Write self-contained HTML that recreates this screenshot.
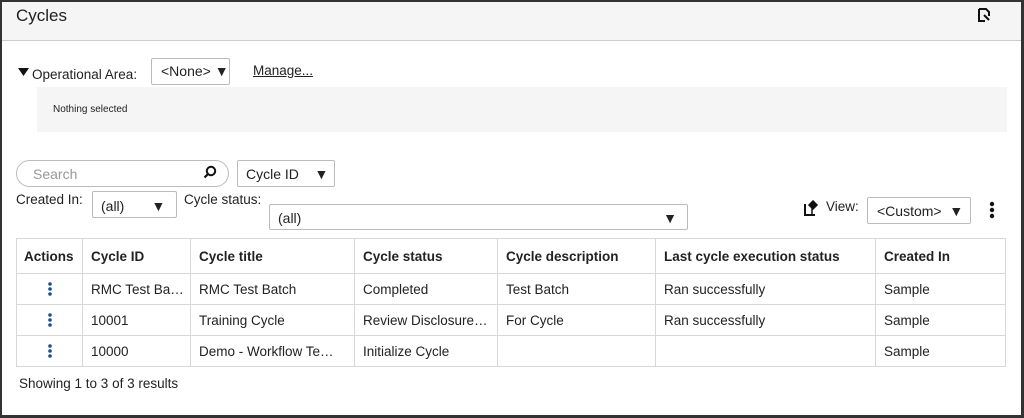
<!DOCTYPE html>
<html><head><meta charset="utf-8"><style>
*{box-sizing:border-box;margin:0;padding:0}
body{width:1024px;height:418px;overflow:hidden;background:#fff;font-family:"Liberation Sans",sans-serif;color:#222;position:relative}
.frame{position:absolute;left:0;top:0;width:1024px;height:418px;border:2px solid #333;border-right-width:3px;border-bottom-width:3px}
.hdr{position:absolute;left:2px;top:2px;width:1019px;height:39px;background:#f5f5f5;border-bottom:1px solid #ccc}
.a{position:absolute;white-space:nowrap}
.box{position:absolute;border:1px solid #bbb;background:#fff;border-radius:2px;font-size:14px}
table{position:absolute;left:16px;top:238px;border-collapse:collapse;font-size:13.5px}
td,th{border:1px solid #d8d8d8;height:31px;padding:0 0 0 8px;text-align:left;white-space:nowrap}
th{height:35px;font-weight:bold;font-size:13.5px}
.dots{text-align:center;padding:0}
.dots svg{display:block;margin:0 auto}
</style></head><body>
<div class="hdr"></div>
<div class="a" style="left:16px;top:6px;font-size:17px">Cycles</div>
<svg class="a" style="left:976px;top:7px" width="16" height="16" viewBox="0 0 16 16"><path d="M3 2h7l3 3v4M3 2v12h6" fill="none" stroke="#111" stroke-width="2"/><path d="M8 8l5 5" stroke="#111" stroke-width="2"/></svg>
<svg class="a" style="left:18px;top:68px" width="11" height="8"><path d="M0 0h11L5.5 8z" fill="#111"/></svg>
<div class="a" style="left:32px;top:67px;font-size:13.5px">Operational Area:</div>
<div class="box" style="left:151px;top:58px;width:79px;height:27px;padding:4px 0 0 9px">&lt;None&gt; ▼</div>
<div class="a" style="left:253px;top:63px;font-size:13.5px;text-decoration:underline">Manage...</div>
<div class="a" style="left:37px;top:87px;width:970px;height:45px;background:#f5f5f5"></div>
<div class="a" style="left:53px;top:104px;font-size:10px">Nothing selected</div>
<div class="box" style="left:16px;top:160px;width:213px;height:27px;border-radius:14px;padding:5px 0 0 16px;color:#999">Search</div>
<svg class="a" style="left:203px;top:165px" width="14" height="14" viewBox="0 0 14 14"><circle cx="8" cy="6" r="4.2" fill="none" stroke="#111" stroke-width="2"/><path d="M5 9l-3.5 3.5" stroke="#111" stroke-width="2.2"/></svg>
<div class="box" style="left:237px;top:160px;width:98px;height:27px;padding:5px 0 0 8px">Cycle ID &nbsp;&nbsp;&nbsp;▼</div>
<div class="a" style="left:16px;top:192px;font-size:13.5px">Created In:</div>
<div class="box" style="left:92px;top:191px;width:85px;height:27px;padding:6px 0 0 8px">(all) &nbsp;&nbsp;&nbsp;&nbsp;&nbsp;&nbsp;▼</div>
<div class="a" style="left:184px;top:192px;font-size:13.5px">Cycle status:</div>
<div class="box" style="left:269px;top:204px;width:419px;height:26px;padding:5px 0 0 8px">(all)<span style="position:absolute;right:10px;top:5px">▼</span></div>
<svg class="a" style="left:804px;top:200px" width="15" height="16" viewBox="0 0 15 16"><path d="M1 4v11h10" fill="none" stroke="#111" stroke-width="2"/><path d="M5 5l4-4 4 4-4 4z M8 5v9" fill="#111" stroke="#111" stroke-width="1.5"/></svg>
<div class="a" style="left:826px;top:199px;font-size:13.5px">View:</div>
<div class="box" style="left:867px;top:197px;width:104px;height:27px;padding:5px 0 0 9px">&lt;Custom&gt; &nbsp;▼</div>
<svg class="a" style="left:989px;top:201px" width="6" height="18"><circle cx="3" cy="3" r="2.2" fill="#111"/><circle cx="3" cy="9" r="2.2" fill="#111"/><circle cx="3" cy="15" r="2.2" fill="#111"/></svg>
<table>
<tr><th style="width:66px;padding-left:7px">Actions</th><th style="width:108px">Cycle ID</th><th style="width:164px">Cycle title</th><th style="width:143px">Cycle status</th><th style="width:158px">Cycle description</th><th style="width:220px">Last cycle execution status</th><th style="width:130px">Created In</th></tr>
<tr><td class="dots"><svg width="4" height="14"><circle cx="2" cy="2" r="1.8" fill="#1f4e8c"/><circle cx="2" cy="7" r="1.8" fill="#1f4e8c"/><circle cx="2" cy="12" r="1.8" fill="#1f4e8c"/></svg></td><td>RMC Test Ba…</td><td>RMC Test Batch</td><td>Completed</td><td>Test Batch</td><td>Ran successfully</td><td>Sample</td></tr>
<tr><td class="dots"><svg width="4" height="14"><circle cx="2" cy="2" r="1.8" fill="#1f4e8c"/><circle cx="2" cy="7" r="1.8" fill="#1f4e8c"/><circle cx="2" cy="12" r="1.8" fill="#1f4e8c"/></svg></td><td>10001</td><td>Training Cycle</td><td>Review Disclosure…</td><td>For Cycle</td><td>Ran successfully</td><td>Sample</td></tr>
<tr><td class="dots"><svg width="4" height="14"><circle cx="2" cy="2" r="1.8" fill="#1f4e8c"/><circle cx="2" cy="7" r="1.8" fill="#1f4e8c"/><circle cx="2" cy="12" r="1.8" fill="#1f4e8c"/></svg></td><td>10000</td><td>Demo - Workflow Te…</td><td>Initialize Cycle</td><td></td><td></td><td>Sample</td></tr>
</table>
<div class="a" style="left:19px;top:376px;font-size:13.5px">Showing 1 to 3 of 3 results</div>
<div class="frame"></div>
</body></html>
